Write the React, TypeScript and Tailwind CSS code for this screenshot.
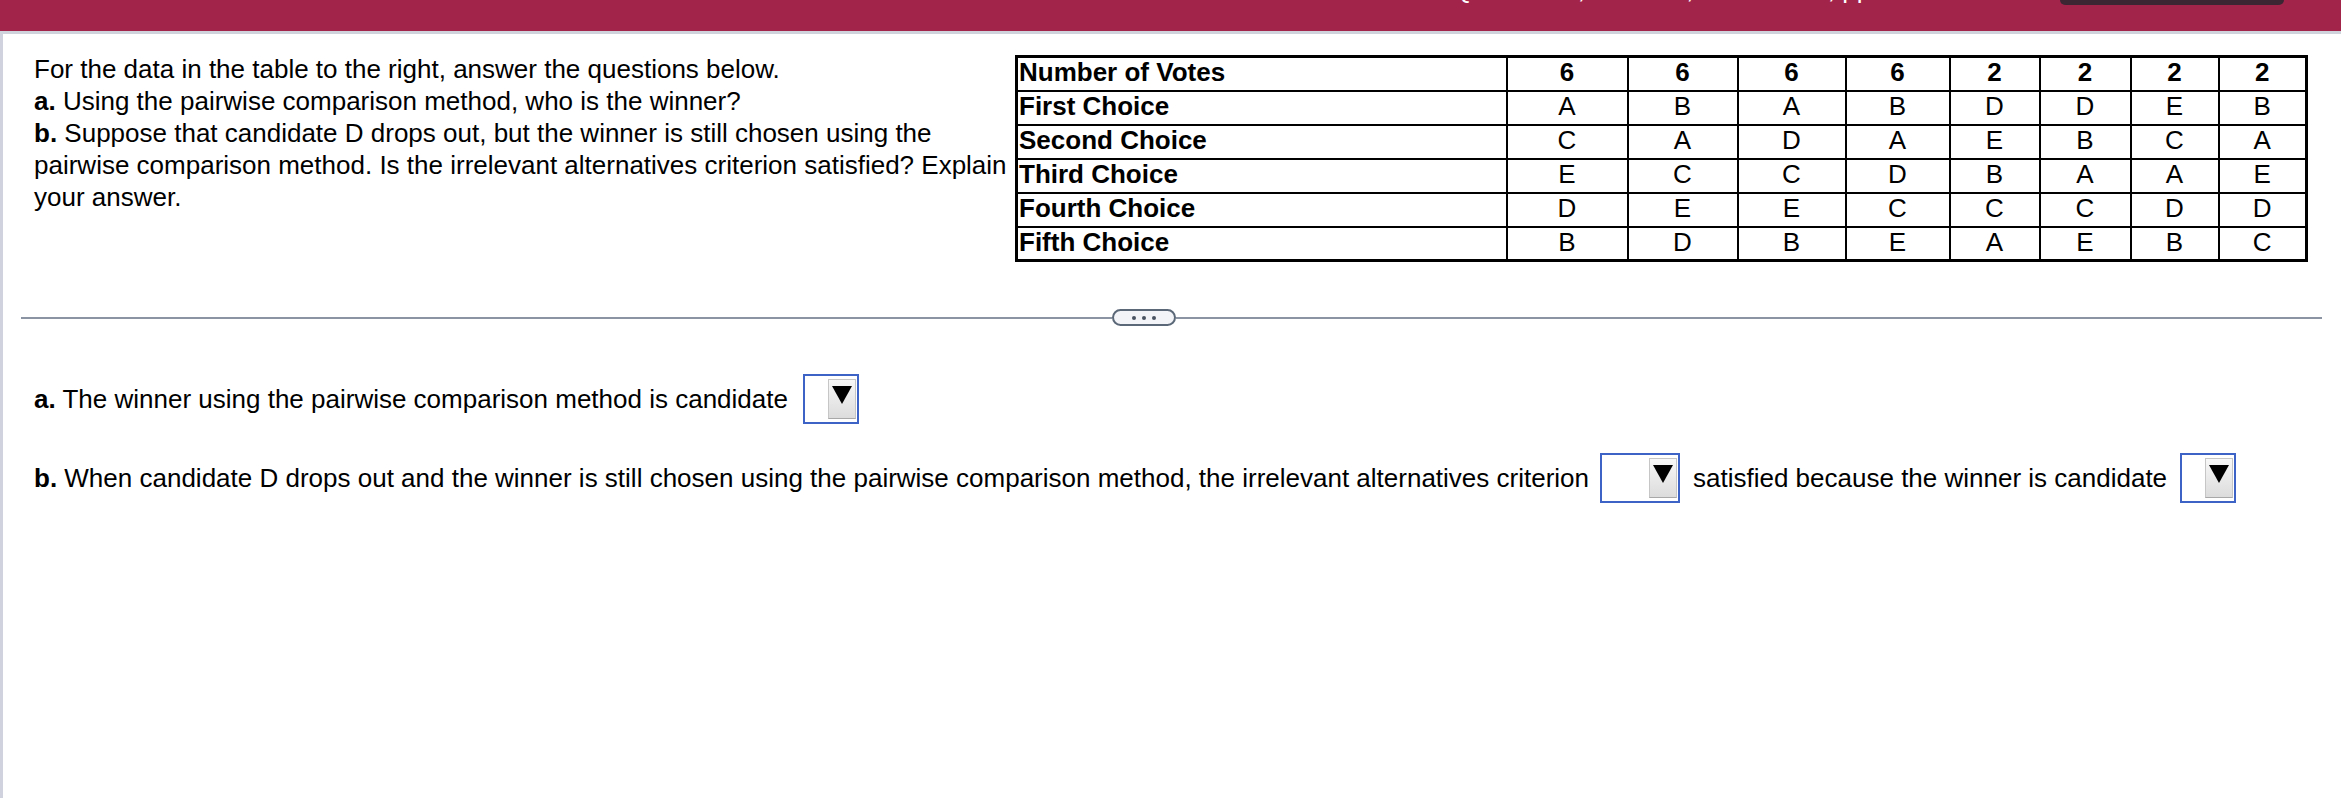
import React from 'react'

const COL_WIDTHS = ['w-[490px]', 'w-[121px]', 'w-[110px]', 'w-[108px]', 'w-[104px]', 'w-[90px]', 'w-[91px]', 'w-[88px]', 'w-[88px]']

const ROWS: { label: string; values: string[] }[] = [
  { label: 'Number of Votes', values: ['6', '6', '6', '6', '2', '2', '2', '2'] },
  { label: 'First Choice', values: ['A', 'B', 'A', 'B', 'D', 'D', 'E', 'B'] },
  { label: 'Second Choice', values: ['C', 'A', 'D', 'A', 'E', 'B', 'C', 'A'] },
  { label: 'Third Choice', values: ['E', 'C', 'C', 'D', 'B', 'A', 'A', 'E'] },
  { label: 'Fourth Choice', values: ['D', 'E', 'E', 'C', 'C', 'C', 'D', 'D'] },
  { label: 'Fifth Choice', values: ['B', 'D', 'B', 'E', 'A', 'E', 'B', 'C'] },
]

function Dropdown({ width }: { width: string }) {
  return (
    <div className={`${width} h-[50px] shrink-0 border-2 border-[#3d63c6] bg-white flex items-center justify-end pr-[1px]`}>
      <div className="w-[28px] h-[40px] border border-[#c6c6c6] border-b-[#a8a8a8] bg-linear-to-b from-[#f8f8f8] to-[#dcdcdc] flex justify-center pt-[6px]">
        <svg width="20" height="18" viewBox="0 0 20 18">
          <polygon points="0,0 20,0 10,18" fill="#000" />
        </svg>
      </div>
    </div>
  )
}

function VoteTable() {
  return (
    <table className="w-[1290px] shrink-0 table-fixed border-collapse border-[3px] border-black mt-[2px] text-[26px]">
      <colgroup>
        {COL_WIDTHS.map((w, i) => (
          <col key={i} className={w} />
        ))}
      </colgroup>
      <tbody>
        {ROWS.map((row, r) => (
          <tr key={row.label}>
            <td className="h-[34px] border-2 border-black pl-[1px] pb-[3px] font-bold leading-[28px] text-left">{row.label}</td>
            {row.values.map((v, i) => (
              <td
                key={i}
                className={
                  r === 0
                    ? 'h-[34px] border-2 border-black pb-[3px] text-center font-bold leading-[28px]'
                    : 'h-[34px] border-2 border-black pb-[3px] text-center leading-[28px]'
                }
              >
                {v}
              </td>
            ))}
          </tr>
        ))}
      </tbody>
    </table>
  )
}

export default function App() {
  return (
    <div className="min-h-screen bg-white text-black font-['Liberation_Sans',Arial,sans-serif]">
      <header className="h-[31px] bg-[#a3244a] overflow-hidden flex items-start">
        <div className="ml-[1452px] -mt-[26px] text-white text-[26px] leading-[30px] whitespace-nowrap">
          Question 7, 2.3.55-T, Part 1 of 2 ,  pp
        </div>
        <div className="ml-auto mr-[57px] w-[224px] h-[5px] rounded-b-[6px] bg-[#3c2634]" />
      </header>
      <div className="h-[3px] bg-[#cfd3dc]" />

      <div className="min-h-[764px] border-l-[3px] border-[#d0d3de] pl-[18px] pr-[19px]">
        {/* question + table */}
        <div className="flex items-start pt-[19px] pl-[13px] pr-[14px]">
          <div className="flex-1 text-[26px] leading-[32px]">
            <p>For the data in the table to the right, answer the questions below.</p>
            <p>
              <span className="font-bold">a.</span> Using the pairwise comparison method, who is the winner?
            </p>
            <p>
              <span className="font-bold">b.</span> Suppose that candidate D drops out, but the winner is still chosen using the
              pairwise comparison method. Is the irrelevant alternatives criterion satisfied? Explain your answer.
            </p>
          </div>
          <VoteTable />
        </div>

        {/* separator */}
        <div className="mt-[47px] h-[17px] flex items-center">
          <div className="w-[1091px] h-[2px] bg-[#8b94a3]" />
          <div className="w-[64px] h-[17px] rounded-full border-2 border-[#5b6878] bg-[#f3f4f7] flex items-center justify-center gap-[6px]">
            <span className="w-[4px] h-[4px] rounded-full bg-[#4a5361]" />
            <span className="w-[4px] h-[4px] rounded-full bg-[#4a5361]" />
            <span className="w-[4px] h-[4px] rounded-full bg-[#4a5361]" />
          </div>
          <div className="flex-1 h-[2px] bg-[#8b94a3]" />
        </div>

        {/* answers */}
        <div className="mt-[48px] pl-[13px] flex items-center text-[26px] leading-[32px] whitespace-nowrap">
          <span>
            <span className="font-bold">a.</span> The winner using the pairwise comparison method is candidate
          </span>
          <div className="ml-[15px]">
            <Dropdown width="w-[56px]" />
          </div>
        </div>

        <div className="mt-[29px] pl-[13px] flex items-center text-[26px] leading-[32px] whitespace-nowrap">
          <span>
            <span className="font-bold">b.</span> When candidate D drops out and the winner is still chosen using the pairwise
            comparison method, the irrelevant alternatives criterion
          </span>
          <div className="ml-[11px]">
            <Dropdown width="w-[80px]" />
          </div>
          <span className="ml-[13px]">satisfied because the winner is candidate</span>
          <div className="ml-[13px]">
            <Dropdown width="w-[56px]" />
          </div>
        </div>
      </div>
    </div>
  )
}
